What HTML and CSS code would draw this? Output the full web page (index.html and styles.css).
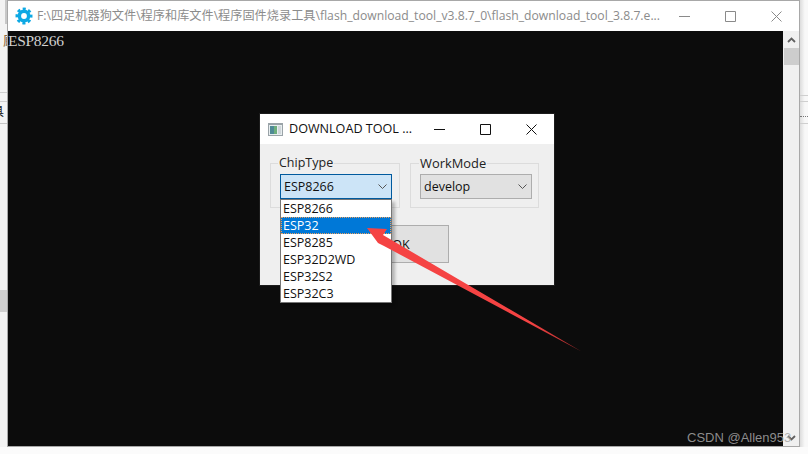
FILE: index.html
```html
<!DOCTYPE html>
<html lang="zh">
<head>
<meta charset="utf-8">
<title>flash_download_tool</title>
<link rel="stylesheet" href="styles.css">
</head>
<body>
<div class="desk">
  <div class="strip strip-left">
    <span class="edge"></span>
    <span class="glyph-top">厩</span>
    <span class="rule rule-a"></span>
    <span class="rule rule-b"></span>
    <span class="glyph">具</span>
    <span class="rule rule-c"></span>
    <span class="block"></span>
  </div>
  <main class="console-window">
    <header class="titlebar">
      <svg class="gear" width="18" height="18" viewBox="0 0 18 18">
        <circle cx="9" cy="9" r="4.700" fill="none" stroke="#0ea9e4" stroke-width="3.600"/>
        <circle cx="9" cy="9" r="7" fill="none" stroke="#0ea9e4" stroke-width="3" stroke-dasharray="3 2.500" stroke-dashoffset="1.500"/>
      </svg>
      <span class="path">F:\四足机器狗文件\程序和库文件\程序固件烧录工具\flash_download_tool_v3.8.7_0\flash_download_tool_3.8.7.e...</span>
      <div class="controls controls-muted">
        <button class="ctl"><svg width="11" height="11" viewBox="0 0 11 11"><path d="M0 5.500h11" stroke="currentColor"/></svg></button>
        <button class="ctl"><svg width="11" height="11" viewBox="0 0 11 11"><path d="M.5.5h10v10H.5z" fill="none" stroke="currentColor"/></svg></button>
        <button class="ctl"><svg width="11" height="11" viewBox="0 0 11 11"><path d="M.5.5l10 10M10.500.5l-10 10" stroke="currentColor"/></svg></button>
      </div>
    </header>
    <div class="console-body">
      <pre class="output">ESP8266</pre>
      <aside class="scrollbar">
        <svg class="chev" width="9" height="6" viewBox="0 0 9 6"><path d="M1 5l3.500-3.500L8 5" fill="none" stroke="#606060" stroke-width="1.800"/></svg>
        <span class="thumb"></span>
        <svg class="chev chev-down" width="9" height="6" viewBox="0 0 9 6"><path d="M1 1l3.500 3.500L8 1" fill="none" stroke="#606060" stroke-width="1.800"/></svg>
      </aside>
    </div>
  </main>
  <div class="strip strip-right">
    <span class="rule rule-d"></span>
    <span class="rule rule-e"></span>
    <span class="dots"></span>
    <span class="rule rule-f"></span>
  </div>

  <section class="dialog">
    <header class="dialog-title">
      <svg class="app-icon" width="15" height="13" viewBox="0 0 15 13">
        <rect width="15" height="13" fill="#9aa3a8"/>
        <rect x="1" y="2" width="13" height="10" fill="#e8eef0"/>
        <rect x="2" y="3" width="4" height="8" fill="#4f8a96"/>
        <rect x="6" y="3" width="3" height="8" fill="#6dae7c"/>
        <rect x="10" y="3" width="3" height="8" fill="#cfd6da"/>
      </svg>
      <span class="dialog-name">DOWNLOAD TOOL ...</span>
      <div class="controls">
        <button class="ctl ctl-dialog"><svg width="11" height="11" viewBox="0 0 11 11"><path d="M0 5.500h11" stroke="currentColor"/></svg></button>
        <button class="ctl ctl-dialog"><svg width="11" height="11" viewBox="0 0 11 11"><path d="M.5.5h10v10H.5z" fill="none" stroke="currentColor"/></svg></button>
        <button class="ctl ctl-dialog"><svg width="11" height="11" viewBox="0 0 11 11"><path d="M.5.5l10 10M10.500.5l-10 10" stroke="currentColor"/></svg></button>
      </div>
    </header>
    <div class="dialog-body">
      <div class="groups">
        <fieldset class="group">
          <legend>ChipType</legend>
          <div class="combo combo-active"><span>ESP8266</span><svg width="9" height="6" viewBox="0 0 9 6"><path d="M.5.5l4 4 4-4" fill="none" stroke="#555"/></svg></div>
        </fieldset>
        <fieldset class="group group-right">
          <legend class="legend-wide">WorkMode</legend>
          <div class="combo"><span>develop</span><svg width="9" height="6" viewBox="0 0 9 6"><path d="M.5.5l4 4 4-4" fill="none" stroke="#555"/></svg></div>
        </fieldset>
      </div>
      <button class="ok">OK</button>
    </div>
    <ul class="popup">
      <li>ESP8266</li>
      <li class="selected">ESP32</li>
      <li>ESP8285</li>
      <li>ESP32D2WD</li>
      <li>ESP32S2</li>
      <li>ESP32C3</li>
    </ul>
  </section>

  <svg class="arrow" width="808" height="454" viewBox="0 0 808 454">
    <defs>
      <linearGradient id="fade" gradientUnits="userSpaceOnUse" x1="530" y1="320" x2="582" y2="351">
        <stop offset="0" stop-color="#f54343"/>
        <stop offset="1" stop-color="#a82a2a"/>
      </linearGradient>
    </defs>
    <path d="M367 228L387 229L383 235L581.500 351.500L384 246L378 243Z" fill="url(#fade)"/>
  </svg>
  <span class="watermark">CSDN @Allen953</span>
</div>
</body>
</html>
```

FILE: styles.css
```css
* { box-sizing: border-box; }
html, body { margin: 0; padding: 0; }
body { width: 808px; height: 454px; overflow: hidden; background: #fff; font-family: "Open Sans", "Noto Sans CJK SC", sans-serif; }

.desk { position: relative; display: flex; width: 808px; height: 454px; background: linear-gradient(#f7f7f7, #fbfbfb); }

.strip { display: flex; flex-direction: column; flex: none; height: 447px; background: #f3f3f3; overflow: hidden; }
.strip-left { width: 7px; }
.strip-right { width: 8px; background: linear-gradient(90deg, #dcdcdc, #f8f8f8 60%); }
.edge { flex: none; align-self: flex-end; width: 2px; height: 24px; background: #c8c8c8; }
.glyph-top { flex: none; height: 24px; margin-left: 3px; padding-top: 8px; font: 13px/16px "Noto Sans CJK SC", sans-serif; color: #8a6a45; white-space: nowrap; }
.rule { display: block; height: 1px; background: #cfcfcf; flex: none; }
.rule-a { margin-top: 44px; }
.rule-b { margin-top: 8px; }
.glyph { flex: none; height: 21px; margin-left: -8px; font-size: 12px; line-height: 19px; color: #222; white-space: nowrap; }
.rule-c { background: #c4c4c4; }
.block { flex: none; height: 22px; margin-top: 166px; background: #cfcfcf; }
.rule-d { margin-top: 95px; }
.rule-e { margin-top: 5px; }
.dots { flex: none; height: 1px; margin-top: 14px; border-top: 1px dotted #777; }
.rule-f { margin-top: 6px; }

.console-window { flex: none; display: flex; flex-direction: column; width: 793px; height: 447px; border: 1px solid #a8a8a8; background: #fff; }
.titlebar { flex: none; display: flex; align-items: center; height: 30px; background: #fff; }
.gear { flex: none; margin-left: 7px; }
.path { flex: 1; min-width: 0; margin-left: 4px; padding-bottom: 2px; font-size: 12.18px; color: #8b8b8b; white-space: nowrap; overflow: hidden; }
.controls { flex: none; display: flex; height: 100%; color: #8a8a8a; }
.controls-muted { width: 137px; }
.ctl { flex: 1; display: flex; align-items: center; justify-content: center; padding: 0; border: 0; background: none; color: inherit; }
.console-body { flex: 1; display: flex; min-height: 0; }
.output { flex: 1; margin: 0; padding: 0; background: #0c0c0c; color: #d0d0d0; font: 15.500px/19px "Liberation Serif", serif; letter-spacing: -.3px; }
.scrollbar { flex: none; display: flex; flex-direction: column; align-items: center; width: 16px; background: #f0f0f0; }
.chev { flex: none; margin-top: 6px; }
.thumb { flex: none; width: 15px; height: 17px; margin-top: 5px; background: #cdcdcd; }
.chev-down { margin-top: auto; margin-bottom: 5px; }

.dialog { position: absolute; left: 260px; top: 114px; display: flex; flex-direction: column; width: 294px; height: 171px; background: #efefef; box-shadow: 0 0 0 1px #1c1c1c; }
.dialog-title { flex: none; display: flex; align-items: center; height: 30px; background: #fff; }
.app-icon { flex: none; margin-left: 8px; }
.dialog-name { flex: 1; min-width: 0; margin-left: 6px; padding-bottom: 2px; font-size: 12.6px; color: #111; white-space: nowrap; }
.ctl-dialog { width: 46px; color: #111; }
.dialog-body { flex: 1; display: flex; flex-direction: column; align-items: center; padding: 11px 14px 0 10px; }
.groups { display: flex; gap: 10px; width: 100%; }
.group { flex: 0 0 130px; height: 53px; margin: 0; padding: 3px 7px 0 9px; border: 1px solid #dcdcdc; min-width: 0; }
.group-right { flex-basis: 129px; }
.group legend { padding: 0 1px; margin-left: -2px; font-size: 12.5px; line-height: 16px; color: #222; }
.group .legend-wide { margin-left: -1px; font-size: 12.900px; }
.combo { display: flex; align-items: center; justify-content: space-between; width: 112px; height: 25px; padding: 0 4px 0 3px; border: 1px solid #adadad; background: #e1e1e1; font-size: 12.5px; color: #111; }
.combo-active { border-color: #005a9e; background: #cce4f7; }
.ok { width: 98px; height: 38px; margin-top: 17px; margin-right: 10px; padding: 0 0 0 2px; border: 1px solid #adadad; background: #e1e1e1; font: 12.5px "Open Sans", sans-serif; color: #111; }

.popup { position: absolute; left: 20px; top: 85px; width: 112px; height: 104px; margin: 0; padding: 0; list-style: none; background: #fff; border: 1px solid #767676; box-shadow: 3px 3px 3px rgba(0,0,0,.25); }
.popup li { height: 17px; padding: 0 2px; font-size: 12.5px; line-height: 17px; color: #111; }
.popup .selected { background: #0078d7; color: #fff; outline: 1px dotted #e8a060; outline-offset: -1px; }

.arrow { position: absolute; left: 0; top: 0; pointer-events: none; }
.watermark { position: absolute; left: 687px; top: 430px; font: 13px/16px "Liberation Sans", sans-serif; color: rgba(165,165,165,.85); white-space: nowrap; }
```
